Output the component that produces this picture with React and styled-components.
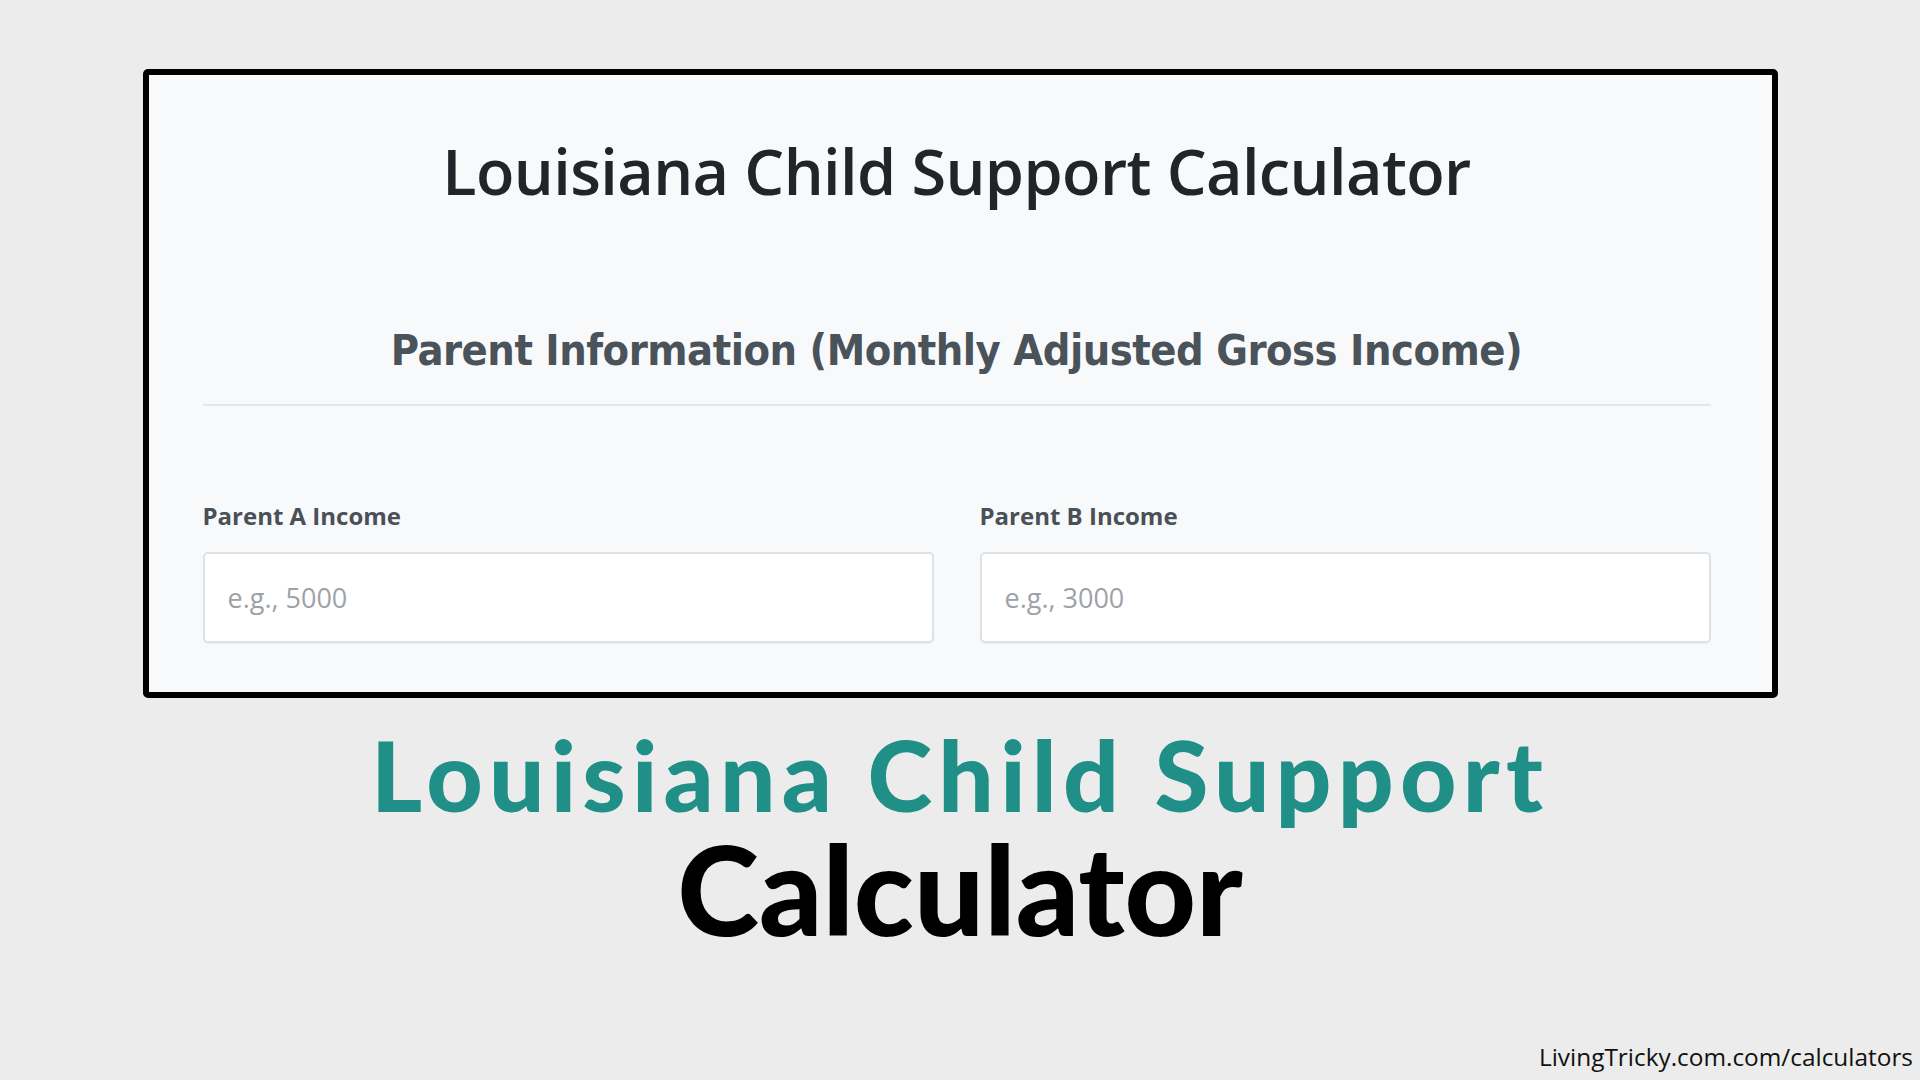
import React from "react";
import styled, { createGlobalStyle } from "styled-components";

const GlobalStyle = createGlobalStyle`
  html, body {
    margin: 0;
    padding: 0;
    background: #ececec;
  }
  * {
    box-sizing: border-box;
  }
`;

const Page = styled.div`
  height: 1080px;
  display: flex;
  flex-direction: column;
  align-items: center;
  padding-top: 69px;
  overflow: hidden;
`;

const Card = styled.section`
  width: 1635px;
  height: 629px;
  background: #f8f9fa;
  border: 6px solid #000;
  border-radius: 5px;
  padding: 64px 61px 0 54px;
  display: flex;
  flex-direction: column;
`;

const Title = styled.h1`
  margin: 0;
  font-family: "Open Sans", "Noto Sans", sans-serif;
  font-weight: 600;
  font-size: 63px;
  line-height: 64px;
  letter-spacing: -0.6px;
  color: #212529;
  text-align: center;
`;

const SectionTitle = styled.h2`
  margin: 124px 0 0;
  padding-bottom: 31px;
  border-bottom: 2px solid #e3e6e9;
  font-family: "DejaVu Sans Condensed", "Liberation Sans Narrow", sans-serif;
  font-weight: 700;
  font-size: 43px;
  line-height: 46px;
  letter-spacing: -0.5px;
  color: #4a525a;
  text-align: center;
`;

const FieldGrid = styled.div`
  margin-top: 96px;
  display: grid;
  grid-template-columns: 1fr 1fr;
  column-gap: 46px;
`;

const Field = styled.div`
  display: flex;
  flex-direction: column;
`;

const Label = styled.label`
  font-family: "Open Sans", "Noto Sans", sans-serif;
  font-weight: 700;
  font-size: 24px;
  line-height: 28px;
  color: #495057;
  margin-bottom: 22px;
`;

const Input = styled.input`
  height: 91px;
  width: 100%;
  padding: 0 23px;
  border: 2px solid #dfe2e5;
  border-radius: 5px;
  background: #fff;
  box-shadow: 0 1px 1px rgba(0, 0, 0, 0.04);
  font-family: "Open Sans", "Noto Sans", sans-serif;
  font-size: 27px;
  color: #212529;
  outline: none;
  &::placeholder {
    color: #9ea2a6;
  }
`;

const Headline = styled.div`
  margin-top: 24px;
  display: flex;
  flex-direction: column;
  align-items: center;
`;

const HeadlineTop = styled.div`
  font-family: "Lato", "Inter", sans-serif;
  font-weight: 900;
  font-size: 98px;
  line-height: 104px;
  letter-spacing: 6.2px;
  color: #1f8f88;
`;

const HeadlineBottom = styled.div`
  font-family: "Lato", "Inter", sans-serif;
  font-weight: 900;
  font-size: 124px;
  line-height: 124px;
  color: #000;
`;

const Footer = styled.div`
  margin-top: auto;
  align-self: flex-end;
  padding: 0 7px 7px 0;
  font-family: "Open Sans", "Noto Sans", sans-serif;
  font-size: 24.4px;
  color: #111;
`;

export default function App() {
  return (
    <>
      <GlobalStyle />
      <Page>
        <Card>
          <Title>Louisiana Child Support Calculator</Title>
          <SectionTitle>Parent Information (Monthly Adjusted Gross Income)</SectionTitle>
          <FieldGrid>
            <Field>
              <Label>Parent A Income</Label>
              <Input type="text" placeholder="e.g., 5000" />
            </Field>
            <Field>
              <Label>Parent B Income</Label>
              <Input type="text" placeholder="e.g., 3000" />
            </Field>
          </FieldGrid>
        </Card>
        <Headline>
          <HeadlineTop>Louisiana Child Support</HeadlineTop>
          <HeadlineBottom>Calculator</HeadlineBottom>
        </Headline>
        <Footer>LivingTricky.com.com/calculators</Footer>
      </Page>
    </>
  );
}
